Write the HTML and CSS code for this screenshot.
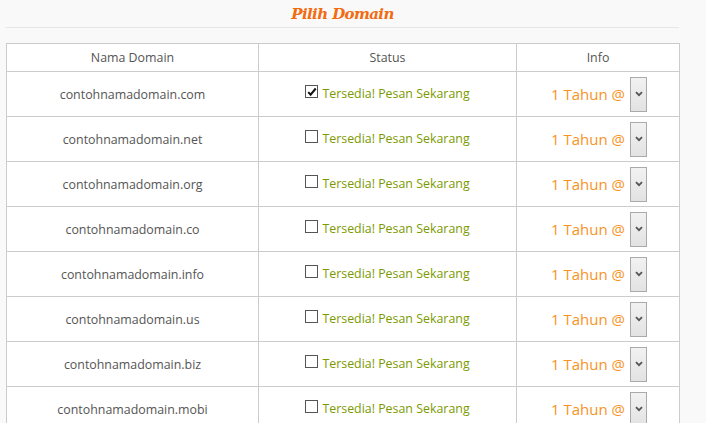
FILE: index.html
```html
<!DOCTYPE html>
<html>
<head>
<meta charset="utf-8">
<link rel="stylesheet" href="styles.css">
</head>
<body>
<div class="wrap">
  <h2 class="title">Pilih Domain</h2>
  <table class="domains">
    <thead>
      <tr><th class="c1">Nama Domain</th><th class="c2">Status</th><th class="c3">Info</th></tr>
    </thead>
    <tbody>
      <tr><td>contohnamadomain.com</td><td><span class="status"><span class="cb checked"><svg viewBox="0 0 12 12" width="10" height="10"><path d="M1.5 6.2 L4.3 9.2 L10.5 1.8" fill="none" stroke="#111" stroke-width="2.4"/></svg></span><span class="ok">Tersedia! Pesan Sekarang</span></span></td><td><span class="info"><span class="yr">1 Tahun @</span><span class="sel"><svg viewBox="0 0 8 6" width="8" height="6"><path d="M1 1.2 L4 4.2 L7 1.2" fill="none" stroke="#555" stroke-width="1.8"/></svg></span></span></td></tr>
      <tr><td>contohnamadomain.net</td><td><span class="status"><span class="cb"></span><span class="ok">Tersedia! Pesan Sekarang</span></span></td><td><span class="info"><span class="yr">1 Tahun @</span><span class="sel"><svg viewBox="0 0 8 6" width="8" height="6"><path d="M1 1.2 L4 4.2 L7 1.2" fill="none" stroke="#555" stroke-width="1.8"/></svg></span></span></td></tr>
      <tr><td>contohnamadomain.org</td><td><span class="status"><span class="cb"></span><span class="ok">Tersedia! Pesan Sekarang</span></span></td><td><span class="info"><span class="yr">1 Tahun @</span><span class="sel"><svg viewBox="0 0 8 6" width="8" height="6"><path d="M1 1.2 L4 4.2 L7 1.2" fill="none" stroke="#555" stroke-width="1.8"/></svg></span></span></td></tr>
      <tr><td>contohnamadomain.co</td><td><span class="status"><span class="cb"></span><span class="ok">Tersedia! Pesan Sekarang</span></span></td><td><span class="info"><span class="yr">1 Tahun @</span><span class="sel"><svg viewBox="0 0 8 6" width="8" height="6"><path d="M1 1.2 L4 4.2 L7 1.2" fill="none" stroke="#555" stroke-width="1.8"/></svg></span></span></td></tr>
      <tr><td>contohnamadomain.info</td><td><span class="status"><span class="cb"></span><span class="ok">Tersedia! Pesan Sekarang</span></span></td><td><span class="info"><span class="yr">1 Tahun @</span><span class="sel"><svg viewBox="0 0 8 6" width="8" height="6"><path d="M1 1.2 L4 4.2 L7 1.2" fill="none" stroke="#555" stroke-width="1.8"/></svg></span></span></td></tr>
      <tr><td>contohnamadomain.us</td><td><span class="status"><span class="cb"></span><span class="ok">Tersedia! Pesan Sekarang</span></span></td><td><span class="info"><span class="yr">1 Tahun @</span><span class="sel"><svg viewBox="0 0 8 6" width="8" height="6"><path d="M1 1.2 L4 4.2 L7 1.2" fill="none" stroke="#555" stroke-width="1.8"/></svg></span></span></td></tr>
      <tr><td>contohnamadomain.biz</td><td><span class="status"><span class="cb"></span><span class="ok">Tersedia! Pesan Sekarang</span></span></td><td><span class="info"><span class="yr">1 Tahun @</span><span class="sel"><svg viewBox="0 0 8 6" width="8" height="6"><path d="M1 1.2 L4 4.2 L7 1.2" fill="none" stroke="#555" stroke-width="1.8"/></svg></span></span></td></tr>
      <tr><td>contohnamadomain.mobi</td><td><span class="status"><span class="cb"></span><span class="ok">Tersedia! Pesan Sekarang</span></span></td><td><span class="info"><span class="yr">1 Tahun @</span><span class="sel"><svg viewBox="0 0 8 6" width="8" height="6"><path d="M1 1.2 L4 4.2 L7 1.2" fill="none" stroke="#555" stroke-width="1.8"/></svg></span></span></td></tr>
    </tbody>
  </table>
</div>
</body>
</html>
```
FILE: styles.css
```css
html, body {
  margin: 0;
  padding: 0;
  background: #f9f9f9;
  overflow: hidden;
}
body {
  font-family: "Open Sans", "DejaVu Sans", sans-serif;
  font-size: 12.4px;
  color: #555;
}
.wrap {
  width: 673px;
  margin-left: 6px;
}
.title {
  margin: 0;
  height: 28px;
  box-sizing: border-box;
  padding-top: 5px;
  border-bottom: 1px solid #e6e6e6;
  text-align: center;
  font-family: "DejaVu Serif", serif;
  font-style: italic;
  font-weight: bold;
  font-size: 15px;
  line-height: 18px;
  color: #f26b10;
  letter-spacing: -0.6px;
}
.domains {
  margin-top: 15px;
  width: 673px;
  border-collapse: collapse;
  background: #fff;
  table-layout: fixed;
}
.domains th, .domains td {
  border: 1px solid #ccc;
  text-align: center;
  padding: 0;
}
.domains th {
  height: 27px;
  font-weight: normal;
  color: #555;
}
.c1 { width: 251px; }
.c2 { width: 257px; }
.c3 { width: 162px; }
.domains td {
  height: 44px;
}
.status {
  display: inline-flex;
  align-items: center;
  gap: 4px;
}
.cb {
  width: 11px;
  height: 11px;
  border: 1px solid #555;
  background: #fff;
  display: inline-flex;
  align-items: center;
  justify-content: center;
  position: relative;
  top: -2px;
}
.ok {
  color: #7c9a00;
}
.info {
  display: inline-flex;
  align-items: center;
  gap: 5px;
  margin-left: 2px;
}
.yr {
  color: #f8931f;
  font-size: 15px;
}
.sel {
  width: 15px;
  height: 33px;
  border: 1px solid #aaa;
  background: linear-gradient(#f2f2f2, #e2e2e2);
  display: inline-flex;
  align-items: center;
  justify-content: center;
}
```
